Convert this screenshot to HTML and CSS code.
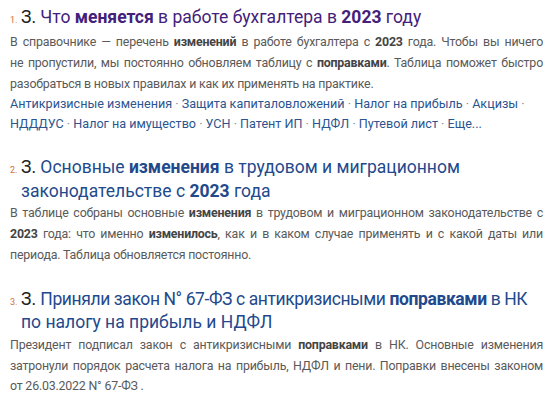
FILE: index.html
```html
<!DOCTYPE html>
<html lang="ru">
<head>
<meta charset="utf-8">
<link rel="stylesheet" href="styles.css">
</head>
<body>
<div class="results">
  <div class="item">
    <div class="head">
      <span class="num">1.</span>
      <h3 class="title"><span class="z">З.</span> <a class="visited" href="#">Что <b>меняется</b> в работе бухгалтера в <b>2023</b> году</a></h3>
    </div>
    <p class="snippet">
      <span class="ln j">В справочнике — перечень <b>изменений</b> в работе бухгалтера с <b>2023</b> года. Чтобы вы ничего</span>
      <span class="ln j">не пропустили, мы постоянно обновляем таблицу с <b>поправками</b>. Таблица поможет быстро</span>
      <span class="ln">разобраться в новых правилах и как их применять на практике.</span>
    </p>
    <p class="tags">
      <span class="ln"><a href="#">Антикризисные изменения</a> · <a href="#">Защита капиталовложений</a> · <a href="#">Налог на прибыль</a> · <a href="#">Акцизы</a> ·</span>
      <span class="ln"><a href="#">НДДДУС</a> · <a href="#">Налог на имущество</a> · <a href="#">УСН</a> · <a href="#">Патент ИП</a> · <a href="#">НДФЛ</a> · <a href="#">Путевой лист</a> · <a href="#">Еще...</a></span>
    </p>
  </div>
  <div class="item">
    <div class="head">
      <span class="num">2.</span>
      <h3 class="title"><span class="z">З.</span> <a href="#">Основные <b>изменения</b> в трудовом и миграционном законодательстве с <b>2023</b> года</a></h3>
    </div>
    <p class="snippet">
      <span class="ln j">В таблице собраны основные <b>изменения</b> в трудовом и миграционном законодательстве с</span>
      <span class="ln j"><b>2023</b> года: что именно <b>изменилось</b>, как и в каком случае применять и с какой даты или</span>
      <span class="ln">периода. Таблица обновляется постоянно.</span>
    </p>
  </div>
  <div class="item">
    <div class="head">
      <span class="num">3.</span>
      <h3 class="title"><span class="z">З.</span> <a href="#"><span class="tline">Приняли закон N° 67-ФЗ с антикризисными <b>поправками</b> в НК</span> по налогу на прибыль и НДФЛ</a></h3>
    </div>
    <p class="snippet">
      <span class="ln j">Президент подписал закон с антикризисными <b>поправками</b> в НК. Основные изменения</span>
      <span class="ln j">затронули порядок расчета налога на прибыль, НДФЛ и пени. Поправки внесены законом</span>
      <span class="ln">от 26.03.2022 N° 67-ФЗ .</span>
    </p>
  </div>
</div>
</body>
</html>
```

FILE: styles.css
```css
html, body {
  margin: 0;
  padding: 0;
  background: #ffffff;
  overflow: hidden;
}
body {
  font-family: Roboto, "Liberation Sans", sans-serif;
  color: #555;
}
.results {
  padding: 6px 8px 0 10px;
  display: flex;
  flex-direction: column;
  gap: 22px;
}
.item {
  display: flex;
  flex-direction: column;
}
.head {
  display: flex;
  align-items: baseline;
}
.num {
  flex: none;
  width: 11px;
  font-size: 9px;
  line-height: 23px;
  color: #d0703c;
}
.title {
  margin: 0;
  font-size: 17.5px;
  font-weight: 400;
  line-height: 23.5px;
  color: #222;
}
.title a {
  color: #22498c;
  text-decoration: none;
}
.title a.visited {
  color: #43217a;
}
.title b {
  font-weight: 700;
}
.tline {
  letter-spacing: -0.4px;
  white-space: nowrap;
}
.ln {
  display: block;
  white-space: nowrap;
}
.j {
  text-align: justify;
  text-align-last: justify;
}
.snippet {
  margin: 0;
  font-size: 12.4px;
  letter-spacing: -0.2px;
  line-height: 20.8px;
  color: #5a5a5a;
}
.snippet b {
  color: #444;
  font-weight: 700;
}
.tags {
  margin: 0;
  font-size: 12.6px;
  line-height: 20px;
  color: #7a8aa8;
}
.tags a {
  color: #2c5590;
  text-decoration: none;
}
```
